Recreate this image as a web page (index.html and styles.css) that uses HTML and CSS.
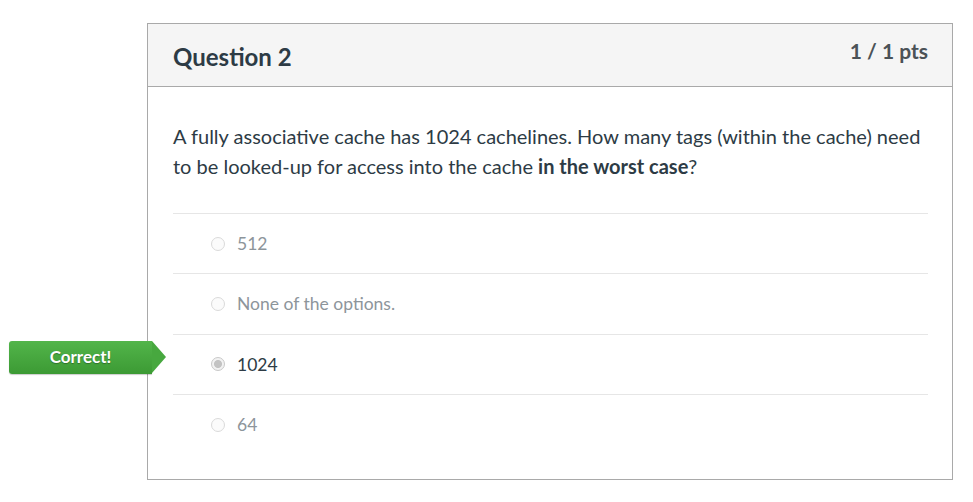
FILE: index.html
```html
<!DOCTYPE html>
<html lang="en">
<head>
  <meta charset="UTF-8">
  <title>Question 2</title>
  <link rel="stylesheet" href="styles.css">
</head>
<body>
  <div class="question">
    <div class="header">
      <h2>Question 2</h2>
      <span class="points">1 / 1 pts</span>
    </div>
    <div class="content">
      <p class="text">A fully associative cache has 1024 cachelines. How many tags (within the cache) need to be looked-up for access into the cache <strong>in the worst case</strong>?</p>
      <div class="answers">
        <div class="answer"><span class="radio"></span>512</div>
        <div class="answer"><span class="radio"></span>None of the options.</div>
        <div class="answer selected">
          <span class="badge">Correct!</span>
          <span class="radio"></span>1024
        </div>
        <div class="answer"><span class="radio"></span>64</div>
      </div>
    </div>
  </div>
</body>
</html>
```

FILE: styles.css
```css
body {
  margin: 0;
  font-family: Lato, "Open Sans", sans-serif;
  background: #fff;
  color: #2d3b45;
}

.question {
  margin: 23px 0 0 147px;
  width: 806px;
  border: 1px solid #a9a9a9;
  height: 457px;
  box-sizing: border-box;
}

.header {
  background: #f5f5f5;
  border-bottom: 1px solid #a9a9a9;
  height: 63px;
  box-sizing: border-box;
  padding: 0 24px 0 25px;
  display: flex;
  justify-content: space-between;
}

.header h2 {
  margin: 0;
  font-size: 24px;
  font-weight: bold;
  line-height: 66px;
}

.points {
  font-size: 21px;
  font-weight: bold;
  line-height: 54px;
  color: #4b5257;
}

.content {
  padding: 34px 24px 0 25px;
}

.text {
  margin: 0 0 32px;
  font-size: 20px;
  line-height: 30px;
}

.answer {
  position: relative;
  border-top: 1px solid #e6e6e6;
  height: 60.3px;
  box-sizing: border-box;
  display: flex;
  align-items: center;
  padding-left: 38px;
  font-size: 17.5px;
  color: #8d959b;
}

.answer.selected {
  color: #2d3b45;
}

.radio {
  width: 12px;
  height: 12px;
  border: 1px solid #dadada;
  border-radius: 50%;
  margin-right: 12px;
  background: #fbfbfb;
  box-sizing: content-box;
}

.selected .radio {
  border-color: #c8c8c8;
  background: radial-gradient(circle, #c3c3c3 0 3.6px, #f2f2f2 4.4px);
}

.badge {
  position: absolute;
  left: -164px;
  top: 6px;
  width: 143px;
  height: 33px;
  background: linear-gradient(#52b54a, #3c9a34);
  border-radius: 3px 0 0 3px;
  color: #fff;
  font-weight: bold;
  font-size: 17px;
  line-height: 31px;
  text-align: center;
  text-shadow: 0 1px 1px rgba(0, 0, 0, 0.3);
  box-shadow: 0 1px 1px rgba(0, 0, 0, 0.2);
}

.badge::after {
  content: "";
  position: absolute;
  right: -14px;
  top: 0;
  border-left: 14px solid #47a83f;
  border-top: 16.5px solid transparent;
  border-bottom: 16.5px solid transparent;
}
```
